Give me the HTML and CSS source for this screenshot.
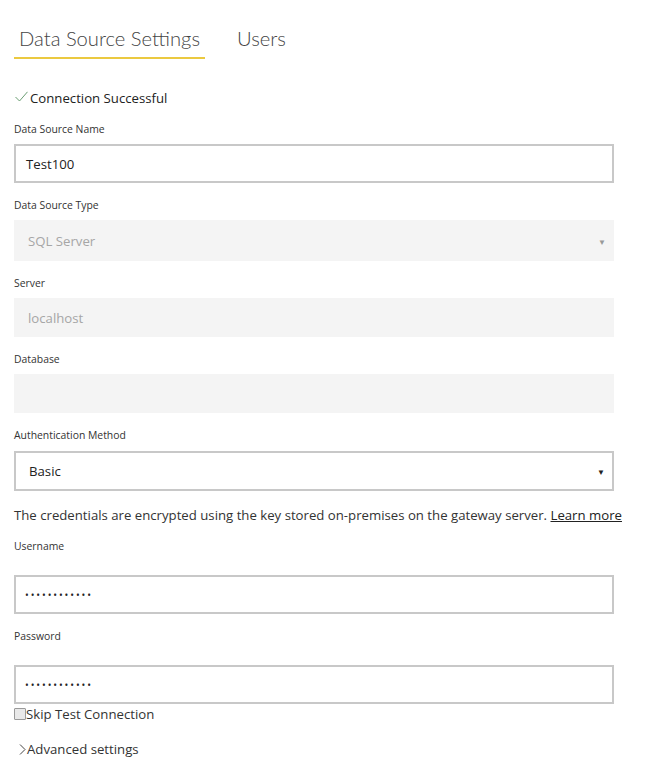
FILE: index.html
```html
<!DOCTYPE html>
<html>
<head>
<meta charset="utf-8">
<link rel="stylesheet" href="styles.css">
</head>
<body>
<div class="page">
  <div class="tabs">
    <div class="tab active">Data Source Settings</div>
    <div class="tab">Users</div>
  </div>
  <div class="status">
    <svg class="check" width="13" height="11" viewBox="0 0 13 11"><path d="M0.5 6 L4.5 10 L12.5 0.8" fill="none" stroke="#6b9e73" stroke-width="1"/></svg>
    <span>Connection Successful</span>
  </div>

  <div class="label first">Data Source Name</div>
  <div class="field input">Test100</div>

  <div class="label">Data Source Type</div>
  <div class="field disabled select">SQL Server<span class="arrow grey">&#9660;</span></div>

  <div class="label">Server</div>
  <div class="field disabled">localhost</div>

  <div class="label">Database</div>
  <div class="field disabled"></div>

  <div class="label">Authentication Method</div>
  <div class="field input select tall">Basic<span class="arrow">&#9660;</span></div>

  <p class="note">The credentials are encrypted using the key stored on-premises on the gateway server. <a href="#">Learn more</a></p>

  <div class="label user">Username</div>
  <div class="field input spaced pw">&#8226;&#8226;&#8226;&#8226;&#8226;&#8226;&#8226;&#8226;&#8226;&#8226;&#8226;&#8226;</div>

  <div class="label">Password</div>
  <div class="field input spaced pw">&#8226;&#8226;&#8226;&#8226;&#8226;&#8226;&#8226;&#8226;&#8226;&#8226;&#8226;&#8226;</div>

  <div class="skip"><span class="box"></span><span>Skip Test Connection</span></div>

  <div class="advanced">
    <svg width="7" height="11" viewBox="0 0 7 11"><path d="M1 0.5 L6 5.5 L1 10.5" fill="none" stroke="#444" stroke-width="1"/></svg>
    <span>Advanced settings</span>
  </div>
</div>
</body>
</html>
```

FILE: styles.css
```css
html, body {
  margin: 0;
  padding: 0;
  background: #fff;
}
.page {
  padding-left: 14px;
  width: 620px;
  font-family: "Open Sans", "Noto Sans", sans-serif;
  color: #333;
}
.tabs {
  display: flex;
  gap: 27px;
}
.tab {
  font-family: "Lato", "Open Sans", sans-serif;
  font-size: 20.2px;
  font-weight: 300;
  line-height: 30px;
  padding: 23px 5px 4px;
  color: #444;
  border-bottom: 2px solid transparent;
}
.tab.active {
  border-bottom-color: #ebc940;
}
.status {
  margin-top: 29px;
  display: flex;
  align-items: center;
  height: 20px;
  font-size: 13.2px;
  color: #222;
}
.check {
  margin: -4px 2px 0 1px;
}
.label {
  font-size: 10.4px;
  line-height: 16px;
  margin-top: 14px;
  color: #333;
}
.label.first {
  margin-top: 13px;
}
.label.user {
  margin-top: 13px;
}
.field {
  box-sizing: border-box;
  width: 600px;
  height: 39px;
  margin-top: 7px;
  font-size: 13.2px;
  display: flex;
  align-items: center;
  padding-left: 10px;
  position: relative;
}
.input {
  border: 2px solid #c8c8c8;
  background: #fff;
  color: #222;
}
.disabled {
  background: #f4f4f4;
  color: #a6a6a6;
  padding-left: 14px;
}
.tall {
  height: 40px;
  margin-top: 8px;
  padding-left: 13px;
}
.select.disabled {
  height: 41px;
}
.arrow {
  position: absolute;
  right: 7px;
  top: 50%;
  transform: translateY(-50%);
  font-size: 8px;
  color: #222;
}
.arrow.grey {
  color: #999;
  right: 8px;
}
.spaced {
  margin-top: 21px;
}
.pw {
  font-size: 10px;
  letter-spacing: 1.9px;
  padding-left: 9px;
}
.note {
  margin: 14px 0 0;
  font-size: 13.2px;
  line-height: 20px;
  color: #333;
  white-space: nowrap;
}
.note a {
  color: #222;
  text-decoration: underline;
}
.skip {
  display: flex;
  align-items: center;
  height: 20px;
  font-size: 13.2px;
  color: #333;
}
.box {
  box-sizing: border-box;
  width: 12px;
  height: 12px;
  border: 1px solid #9a9a9a;
  background: #e9e9e9;
  border-radius: 1px;
}
.advanced {
  margin-top: 15px;
  display: flex;
  align-items: center;
  height: 20px;
  font-size: 13.2px;
  color: #333;
}
.advanced svg {
  margin: 0 1px 0 5px;
}
```
